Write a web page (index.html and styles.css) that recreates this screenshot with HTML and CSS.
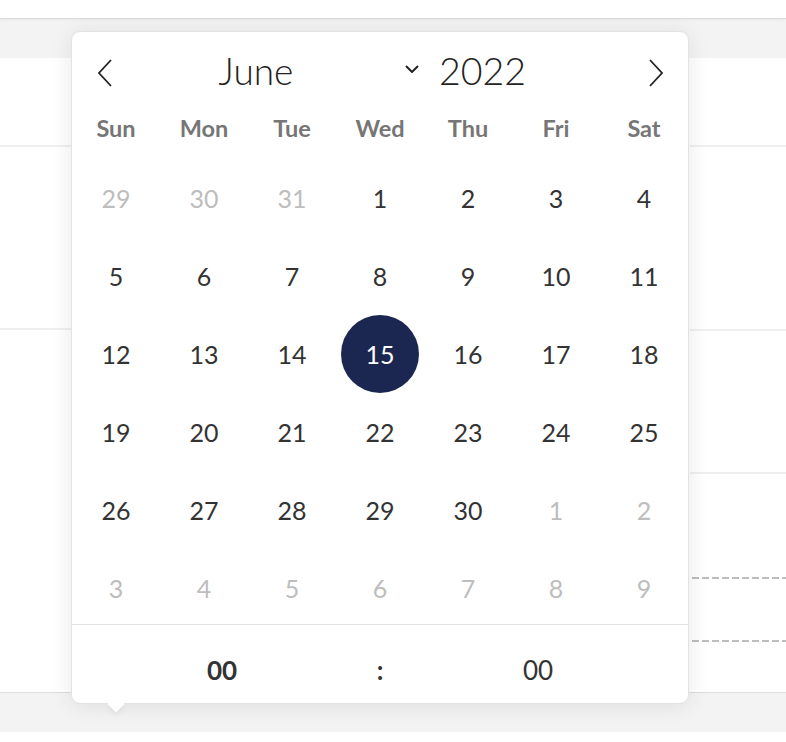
FILE: index.html
```html
<!DOCTYPE html>
<html lang="en">
<head>
<meta charset="utf-8">
<title>Date picker</title>
<link rel="stylesheet" href="styles.css">
</head>
<body>
<div class="topbar"></div>
<div class="stage">
  <div class="panel">
    <div class="side side-left">
      <div class="cell h89 line"></div>
      <div class="cell h183 line"></div>
      <div class="cell grow"></div>
    </div>
    <div class="middle"></div>
    <div class="side side-right">
      <div class="cell h89 line"></div>
      <div class="cell h184 line"></div>
      <div class="cell h143 line"></div>
      <div class="cell h103"></div>
      <div class="dash"></div>
      <div class="cell h61"></div>
      <div class="dash"></div>
      <div class="cell grow"></div>
    </div>
  </div>
</div>
<div class="bottom"></div>

<div class="picker">
  <div class="header">
    <button class="nav nav-prev" aria-label="Previous month">
      <svg width="24" height="28" viewBox="0 0 24 28"><path d="M17 1 L5 14 L17 27" fill="none" stroke="#222" stroke-width="1.8"/></svg>
    </button>
    <div class="month">June</div>
    <svg class="caret" width="16" height="8" viewBox="0 0 16 8"><path d="M2 1 L8 7 L14 1" fill="none" stroke="#222" stroke-width="2"/></svg>
    <div class="year">2022</div>
    <button class="nav nav-next" aria-label="Next month">
      <svg width="24" height="28" viewBox="0 0 24 28"><path d="M7 1 L19 14 L7 27" fill="none" stroke="#222" stroke-width="1.8"/></svg>
    </button>
  </div>
  <div class="weekdays">
    <span>Sun</span><span>Mon</span><span>Tue</span><span>Wed</span><span>Thu</span><span>Fri</span><span>Sat</span>
  </div>
  <div class="days">
    <span class="muted">29</span><span class="muted">30</span><span class="muted">31</span><span>1</span><span>2</span><span>3</span><span>4</span>
    <span>5</span><span>6</span><span>7</span><span>8</span><span>9</span><span>10</span><span>11</span>
    <span>12</span><span>13</span><span>14</span><span><b class="selected">15</b></span><span>16</span><span>17</span><span>18</span>
    <span>19</span><span>20</span><span>21</span><span>22</span><span>23</span><span>24</span><span>25</span>
    <span>26</span><span>27</span><span>28</span><span>29</span><span>30</span><span class="muted">1</span><span class="muted">2</span>
    <span class="muted">3</span><span class="muted">4</span><span class="muted">5</span><span class="muted">6</span><span class="muted">7</span><span class="muted">8</span><span class="muted">9</span>
  </div>
  <div class="time">
    <span class="hh">00</span>
    <span class="colon">:</span>
    <span class="mm">00</span>
  </div>
</div>
</body>
</html>
```
FILE: styles.css
```css
html, body {
  margin: 0;
  padding: 0;
}
body {
  background: #ffffff;
  font-family: Lato, "Open Sans", "Liberation Sans", sans-serif;
  width: 786px;
  height: 742px;
  overflow: hidden;
  position: relative;
}
.topbar {
  height: 18px;
  border-bottom: 1px solid #dadada;
  box-shadow: 0 1px 3px rgba(0, 0, 0, 0.05);
  background: #fff;
  position: relative;
}
.stage {
  background: #f4f3f4;
  padding: 39px 0 39px;
}
.panel {
  height: 634px;
  background: #fff;
  border-bottom: 1px solid #dddddd;
  display: flex;
}
.side {
  display: flex;
  flex-direction: column;
}
.side-left {
  width: 72px;
}
.middle {
  flex: 1;
}
.side-right {
  width: 96px;
}
.cell {
  flex: none;
}
.line {
  border-bottom: 2px solid #efefef;
}
.h89 { height: 87px; }
.h183 { height: 181px; }
.h184 { height: 182px; }
.h143 { height: 141px; }
.h103 { height: 103px; }
.h61 { height: 61px; }
.grow { flex: 1; }
.dash {
  height: 2px;
  margin-left: 2px;
  background: repeating-linear-gradient(to right, #bdbdbd 0 7px, transparent 7px 10px);
}

.picker {
  position: absolute;
  left: 71px;
  top: 31px;
  width: 616px;
  height: 671px;
  background: #fff;
  border: 1px solid #e3e3e3;
  border-radius: 9px;
  box-shadow: 0 2px 22px rgba(0, 0, 0, 0.09);
  display: flex;
  flex-direction: column;
}
.picker::after {
  content: "";
  position: absolute;
  left: 38px;
  bottom: -7px;
  width: 12px;
  height: 12px;
  background: #fff;
  transform: rotate(45deg);
  box-shadow: 3px 3px 4px rgba(0, 0, 0, 0.04);
}
.header {
  height: 82px;
  display: flex;
  align-items: center;
  color: #222;
}
.nav {
  border: 0;
  background: none;
  padding: 0;
  width: 24px;
  height: 28px;
  display: flex;
}
.nav-prev {
  margin-left: 22px;
}
.nav-next {
  margin-left: auto;
  margin-right: 21px;
}
.month {
  width: 276px;
  text-align: center;
  font-size: 37px;
  font-weight: 300;
  line-height: 44px;
  margin-bottom: 4px;
}
.caret {
  margin-left: 10px;
  margin-bottom: 8px;
}
.year {
  margin-left: 19px;
  font-size: 37.5px;
  font-weight: 300;
  line-height: 44px;
  margin-bottom: 4px;
}
.weekdays {
  height: 28px;
  display: grid;
  grid-template-columns: repeat(7, 88px);
  align-items: center;
  justify-items: center;
  font-size: 23.5px;
  font-weight: 700;
  color: #767676;
}
.days {
  margin-top: 20px;
  display: grid;
  grid-template-columns: repeat(7, 88px);
  grid-auto-rows: 72px;
  row-gap: 6px;
  font-size: 25px;
  color: #333;
}
.days span {
  display: flex;
  align-items: center;
  justify-content: center;
}
.days .muted {
  color: #bdbdbd;
}
.selected {
  flex: none;
  width: 78px;
  height: 78px;
  border-radius: 50%;
  background: #1c2751;
  color: #fff;
  font-weight: 400;
  display: flex;
  align-items: center;
  justify-content: center;
}
.time {
  border-top: 1px solid #e2e2e2;
  flex: 1;
  display: grid;
  grid-template-columns: 300px 16px 300px;
  align-items: center;
  justify-items: center;
  padding-top: 12px;
  font-size: 26px;
  color: #333;
}
.hh {
  font-weight: 700;
}
.colon {
  font-weight: 700;
}
```
